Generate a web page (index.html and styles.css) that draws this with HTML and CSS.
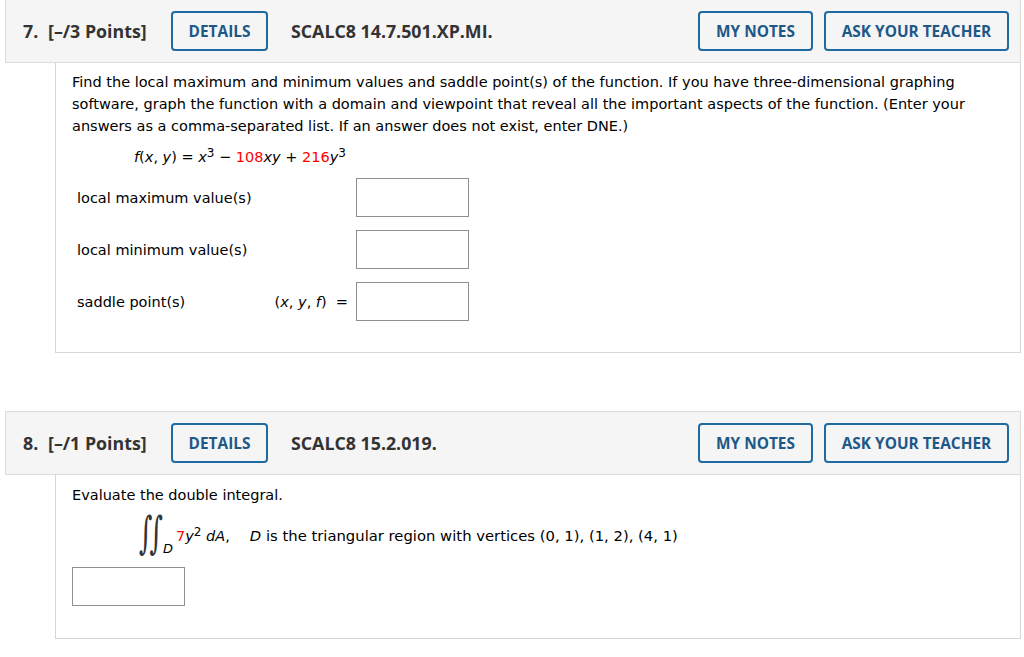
FILE: index.html
```html
<!DOCTYPE html>
<html>
<head>
<meta charset="utf-8">
<link rel="stylesheet" href="styles.css">
</head>
<body>
<div class="page">
  <section class="question first">
    <header class="q-head">
      <span class="q-num">7.</span>
      <span class="q-points">[–/3 Points]</span>
      <button class="btn btn-details">DETAILS</button>
      <span class="q-code">SCALC8 14.7.501.XP.MI.</span>
      <span class="spacer"></span>
      <button class="btn btn-notes">MY NOTES</button>
      <button class="btn btn-ask">ASK YOUR TEACHER</button>
    </header>
    <div class="q-body body-one">
      <p class="para">Find the local maximum and minimum values and saddle point(s) of the function. If you have three-dimensional graphing software, graph the function with a domain and viewpoint that reveal all the important aspects of the function. (Enter your answers as a comma-separated list. If an answer does not exist, enter DNE.)</p>
      <div class="formula"><i>f</i>(<i>x</i>, <i>y</i>) = <i>x</i><sup>3</sup> − <span class="red">108</span><i>xy</i> + <span class="red">216</span><i>y</i><sup>3</sup></div>
      <div class="answers">
        <span class="label">local maximum value(s)</span><span class="mid"></span><span class="box"></span>
        <span class="label">local minimum value(s)</span><span class="mid"></span><span class="box"></span>
        <span class="label">saddle point(s)</span><span class="mid">(<i>x</i>, <i>y</i>, <i>f</i>)&nbsp; =</span><span class="box"></span>
      </div>
    </div>
  </section>

  <section class="question second">
    <header class="q-head">
      <span class="q-num">8.</span>
      <span class="q-points">[–/1 Points]</span>
      <button class="btn btn-details">DETAILS</button>
      <span class="q-code">SCALC8 15.2.019.</span>
      <span class="spacer"></span>
      <button class="btn btn-notes">MY NOTES</button>
      <button class="btn btn-ask">ASK YOUR TEACHER</button>
    </header>
    <div class="q-body body-two">
      <p class="para">Evaluate the double integral.</p>
      <div class="integral-line">
        <span class="integral"><span class="int-signs">∫∫</span><i class="int-d">D</i></span>
        <span class="integrand"><span class="red">7</span><i>y</i><sup>2</sup> <i>dA</i>,</span>
        <span class="region"><i>D</i> is the triangular region with vertices (0, 1), (1, 2), (4, 1)</span>
      </div>
      <span class="box single"></span>
    </div>
  </section>
</div>
</body>
</html>
```

FILE: styles.css
```css
html, body {
  margin: 0;
  padding: 0;
  background: #ffffff;
}

.page {
  padding: 0 3px 0 5px;
}

.question.first {
  margin-top: -1px;
}

.question.second {
  margin-top: 58px;
}

.q-head {
  display: flex;
  align-items: center;
  height: 62px;
  background: #f5f5f5;
  border: 1px solid #dcdcdc;
  padding: 0 11px 0 17px;
  font-family: "Open Sans", "Liberation Sans", sans-serif;
  font-weight: 700;
  font-size: 17.8px;
  color: #333333;
}

.q-num {
  width: 25px;
}

.q-points {
  width: 123px;
}

.q-code {
  margin-left: 23px;
}

.spacer {
  flex: 1;
}

.btn {
  box-sizing: border-box;
  height: 40px;
  border: 2px solid #1f6aa0;
  border-radius: 4px;
  background: transparent;
  font-family: "Open Sans", "Liberation Sans", sans-serif;
  font-weight: 700;
  font-size: 15.4px;
  color: #1d5887;
  padding: 0;
}

.btn-details {
  width: 97px;
}

.btn-notes {
  width: 115px;
}

.btn-ask {
  width: 185px;
  margin-left: 11px;
}

.q-body {
  margin-left: 50px;
  border: 1px solid #d6d6d6;
  border-top: none;
  padding: 0 16px;
  font-family: Verdana, "DejaVu Sans", sans-serif;
  font-size: 14.5px;
  color: #000;
  line-height: 22px;
}

.body-one {
  padding-top: 8px;
  padding-bottom: 31px;
}

.body-two {
  padding-top: 9px;
  padding-bottom: 32px;
}

.para {
  margin: 0;
}

.red {
  color: #ff0000;
}

sup {
  font-size: 12px;
  line-height: 0;
  vertical-align: 5px;
}

.formula {
  margin: 9px 0 0 62px;
}

.answers {
  display: grid;
  grid-template-columns: 195px 84px 113px;
  grid-auto-rows: 39px;
  row-gap: 13px;
  margin: 10px 0 0 5px;
  align-items: center;
}

.mid {
  text-align: right;
  padding-right: 8px;
}

.box {
  box-sizing: border-box;
  height: 39px;
  border: 1px solid #8f8f8f;
  background: #fff;
  display: block;
}

.integral-line {
  display: flex;
  align-items: center;
  height: 44px;
  margin: 8px 0 0 67px;
}

.integral {
  display: inline-block;
  width: 37px;
  height: 44px;
  position: relative;
}

.int-signs {
  display: inline-block;
  font-family: "DejaVu Serif", serif;
  font-style: italic;
  font-size: 26px;
  line-height: 26px;
  letter-spacing: -3px;
  color: #333;
  transform: scale(1, 1.7);
  transform-origin: left top;
  margin-top: -3px;
}

.int-d {
  position: absolute;
  left: 24px;
  bottom: 3px;
  font-size: 13px;
  line-height: 13px;
}

.region {
  margin-left: 20px;
  font-size: 14.8px;
}

.box.single {
  margin-top: 9px;
  width: 113px;
}
```
